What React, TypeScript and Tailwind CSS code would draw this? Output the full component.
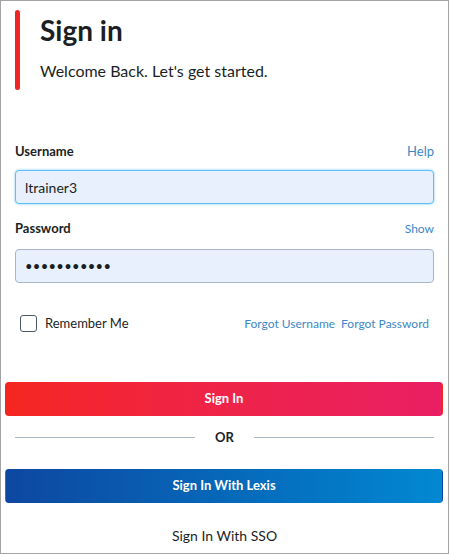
export default function App() {
  return (
    <div className="h-[554px] w-[449px] border border-[#a3a3a3] bg-white font-['Lato',sans-serif] text-[#1b1f24]">
      <div className="ml-[14px] mt-[9px] flex h-[80px] gap-[20px]">
        <div className="w-[5px] rounded-full bg-[#ee2524]" />
        <div>
          <h1 className="mt-[3px] text-[28px] font-bold leading-[35px]">Sign in</h1>
          <p className="mt-[13px] text-[16px] leading-[20px]">Welcome Back. Let's get started.</p>
        </div>
      </div>

      <form className="mt-[52px] px-[14px]">
        <div className="flex items-baseline justify-between">
          <label className="text-[13px] font-bold leading-[18px]">Username</label>
          <a className="text-[13px] leading-[18px] text-[#3d88c7]">Help</a>
        </div>
        <input
          readOnly
          value="ltrainer3"
          className="mt-[10px] block h-[34px] w-full rounded-[4px] border border-[#5cc0f4] bg-[#e8f0fe] pl-[9px] text-[14px] shadow-[0_0_2px_1px_#c4e6fb] outline-none"
        />

        <div className="mt-[15px] flex items-baseline justify-between">
          <label className="text-[13px] font-bold leading-[18px]">Password</label>
          <a className="text-[12px] leading-[18px] text-[#3d88c7]">Show</a>
        </div>
        <input
          readOnly
          type="password"
          value="abcdefghijk"
          className="mt-[11px] block h-[34px] w-full rounded-[4px] border border-[#a9b6c6] bg-[#e8f0fe] pl-[9px] text-[13px] tracking-[0.3px] outline-none"
        />

        <div className="mt-[31px] flex items-center justify-between px-[5px]">
          <label className="flex items-center gap-[8px] text-[13px]">
            <span className="block size-[17px] rounded-[3px] border-[1.5px] border-[#4b5a69]" />
            Remember Me
          </label>
          <div className="flex gap-[6px] text-[12px] text-[#3d88c7]">
            <a>Forgot Username</a>
            <a>Forgot Password</a>
          </div>
        </div>
      </form>

      <div className="ml-[4px] w-[438px]">
        <button className="mt-[48px] block h-[34px] w-full rounded-[4px] border border-transparent bg-linear-to-r from-[#f5261f] to-[#e91e63] text-[13px] font-bold text-white">
          Sign In
        </button>
      </div>

      <div className="mt-[14px] flex h-[16px] items-center px-[14px]">
        <div className="h-px flex-1 bg-[#a9b8c4]" />
        <span className="mx-[20px] text-[13px] font-bold">OR</span>
        <div className="h-px flex-1 bg-[#a9b8c4]" />
      </div>

      <div className="ml-[4px] w-[438px]">
        <button className="mt-[23px] block h-[34px] w-full rounded-[4px] border border-transparent bg-linear-to-r from-[#0d47a1] to-[#0288d1] text-[13px] font-bold text-white">
          Sign In With Lexis
        </button>
      </div>

      <p className="mt-[24px] text-center text-[14px] leading-[18px]">Sign In With SSO</p>
    </div>
  );
}
